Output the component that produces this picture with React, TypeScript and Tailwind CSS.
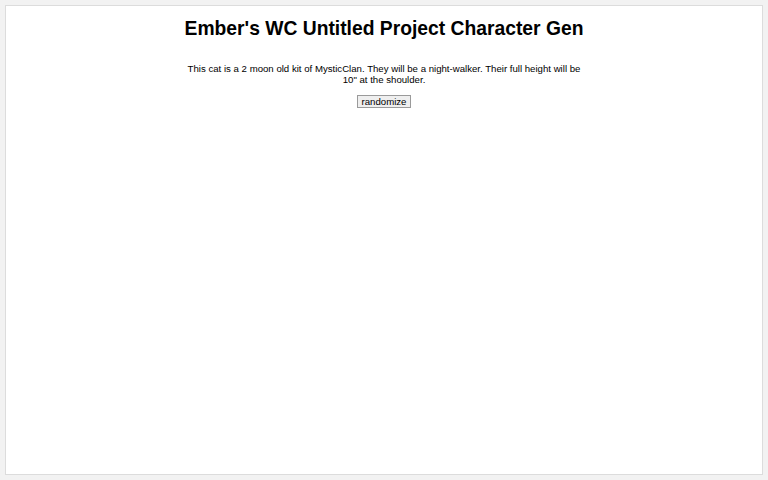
// Character generator page: title, generated blurb, randomize button
export default function App() {
  return (
    <div
      className="h-[480px] w-[768px] bg-[#f2f2f2] p-[5px]"
      style={{ fontFamily: '"Liberation Sans", Arial, sans-serif' }}
    >
      <div className="flex h-full flex-col items-center border border-[#dcdcdc] bg-white">
        <h1 className="mt-[11px] text-[19.3px] font-bold leading-[23px] text-black">
          Ember's WC Untitled Project Character Gen
        </h1>
        <p className="mt-[23px] w-[398px] text-center text-[9.65px] leading-[11px] text-black">
          This cat is a 2 moon old kit of MysticClan. They will be a night-walker. Their full height
          will be 10" at the shoulder.
        </p>
        <button className="mt-[10px] h-[13px] border border-[#9a9a9a] bg-[#efefef] px-[4px] text-[9.65px] leading-[11px] text-black">
          randomize
        </button>
      </div>
    </div>
  );
}
